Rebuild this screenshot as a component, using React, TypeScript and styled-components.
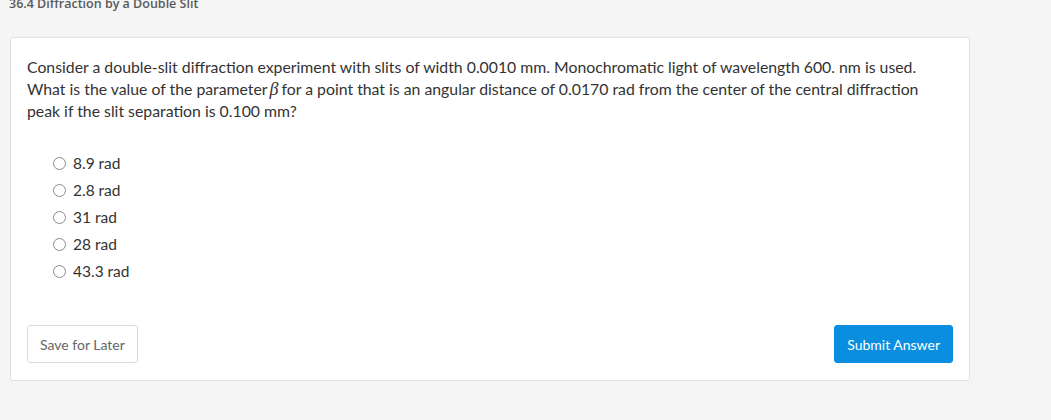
import React, { useState } from "react";
import styled, { createGlobalStyle } from "styled-components";

const GlobalStyle = createGlobalStyle`
  html, body {
    margin: 0;
    padding: 0;
    background: #f5f5f5;
    font-family: Lato, "Open Sans", Arial, sans-serif;
    color: #333;
  }
  * { box-sizing: border-box; }
`;

const Page = styled.div`
  width: 1051px;
  height: 420px;
  overflow: hidden;
  padding: 0 10px;
`;

const Heading = styled.h2`
  margin: -3px 0 0 -1px;
  font-family: "Open Sans", Lato, sans-serif;
  font-size: 12.5px;
  line-height: 14px;
  font-weight: 600;
  color: #5a5a5a;
`;

const Card = styled.div`
  margin-top: 26px;
  width: 960px;
  background: #fff;
  border: 1px solid #e1e1e1;
  border-radius: 3px;
  padding: 18px 16px 17px 16px;
`;

const Question = styled.p`
  margin: 0;
  font-size: 15.8px;
  line-height: 22px;
  color: #333;
  padding-right: 20px;
`;

const Beta = styled.span`
  font-family: "Liberation Serif", "DejaVu Serif", serif;
  font-style: italic;
  font-size: 18px;
  padding: 0 3px 0 2px;
`;

const Options = styled.ul`
  list-style: none;
  margin: 30px 0 0 0;
  padding: 0 0 0 26px;
  display: flex;
  flex-direction: column;
  gap: 5px;
`;

const Option = styled.li`
  display: flex;
  align-items: center;
  height: 22px;
  font-size: 15.5px;
  color: #333;
  cursor: pointer;
`;

const Radio = styled.span<{ $checked: boolean }>`
  width: 13px;
  height: 13px;
  border-radius: 50%;
  border: 1px solid #8a8a8a;
  margin-right: 7px;
  flex: none;
  display: flex;
  align-items: center;
  justify-content: center;
  &::after {
    content: "";
    width: 7px;
    height: 7px;
    border-radius: 50%;
    background: ${(p) => (p.$checked ? "#0a8fe0" : "transparent")};
  }
`;

const Footer = styled.div`
  margin-top: 43px;
  display: flex;
  justify-content: space-between;
  align-items: center;
`;

const Button = styled.button<{ $primary?: boolean }>`
  height: 38px;
  padding: 0 12px;
  font-family: Lato, "Open Sans", Arial, sans-serif;
  font-size: 14px;
  border-radius: 3px;
  cursor: pointer;
  border: 1px solid ${(p) => (p.$primary ? "#0a8ee0" : "#dcdcdc")};
  background: ${(p) => (p.$primary ? "#0a8ee0" : "#fff")};
  color: ${(p) => (p.$primary ? "#fff" : "#666")};
`;

const answers = ["8.9 rad", "2.8 rad", "31 rad", "28 rad", "43.3 rad"];

const App: React.FC = () => {
  const [picked, setPicked] = useState<number | null>(null);

  return (
    <>
      <GlobalStyle />
      <Page>
        <Heading>36.4 Diffraction by a Double Slit</Heading>
        <Card>
          <Question>
            Consider a double-slit diffraction experiment with slits of width
            0.0010 mm. Monochromatic light of wavelength 600. nm is used. What
            is the value of the parameter<Beta>β</Beta>for a point that is an
            angular distance of 0.0170 rad from the center of the central
            diffraction peak if the slit separation is 0.100 mm?
          </Question>
          <Options>
            {answers.map((a, i) => (
              <Option key={a} onClick={() => setPicked(i)}>
                <Radio $checked={picked === i} />
                {a}
              </Option>
            ))}
          </Options>
          <Footer>
            <Button>Save for Later</Button>
            <Button $primary>Submit Answer</Button>
          </Footer>
        </Card>
      </Page>
    </>
  );
};

export default App;
